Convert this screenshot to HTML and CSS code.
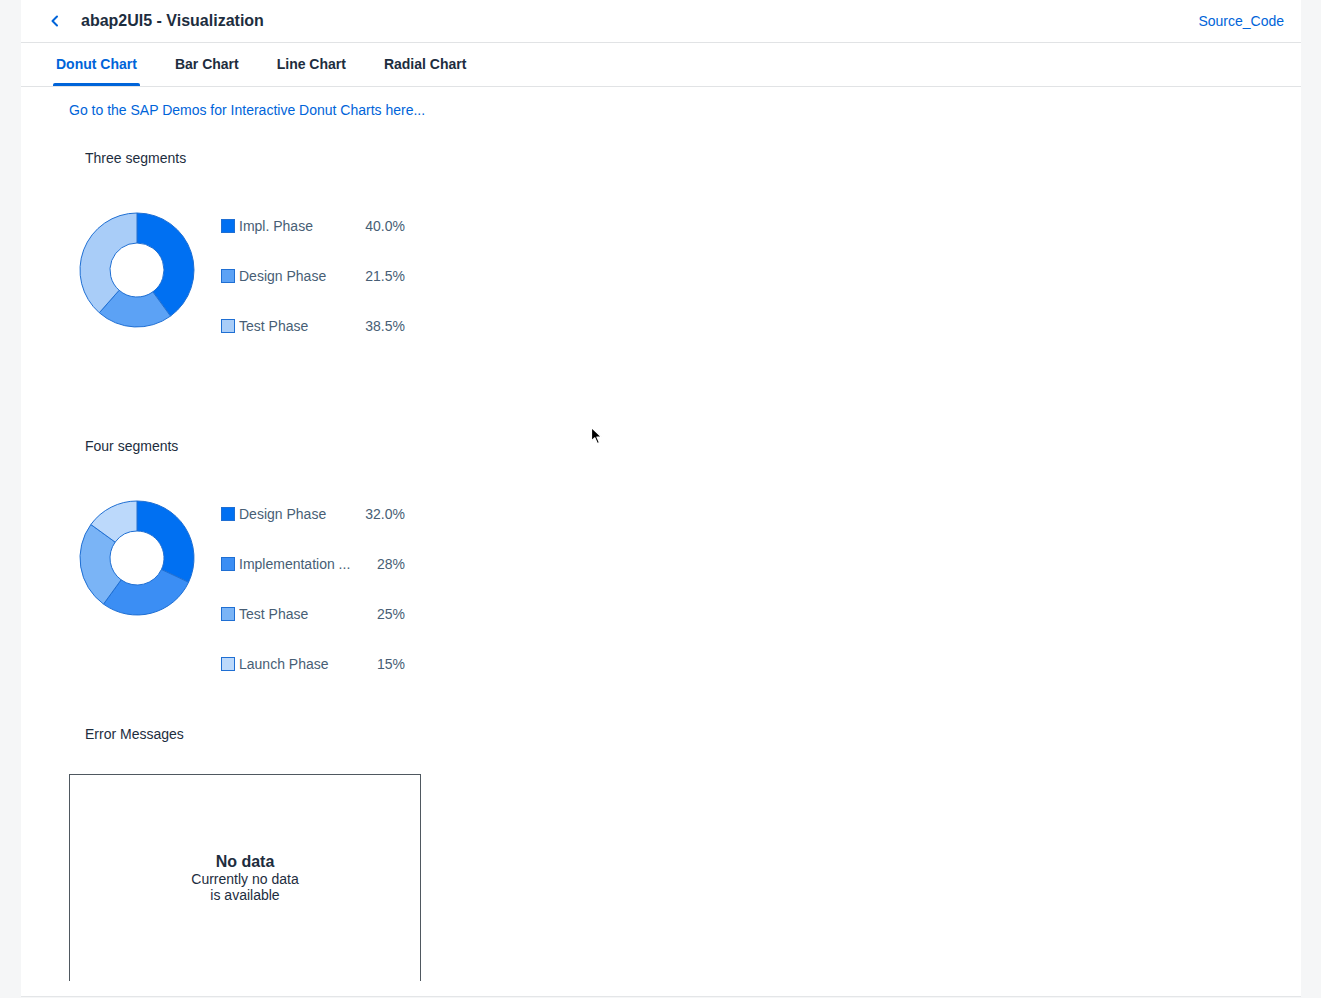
FILE: index.html
```html
<!DOCTYPE html>
<html lang="en">
<head>
<meta charset="utf-8">
<title>abap2UI5 - Visualization</title>
<link rel="stylesheet" href="styles.css">
</head>
<body>
<div class="page">
  <header class="header">
    <div class="header-left">
      <svg class="back" width="12" height="14" viewBox="0 0 12 14"><polyline points="8,2.5 3.5,7 8,11.5" fill="none" stroke="#0064d9" stroke-width="2" stroke-linecap="round" stroke-linejoin="round"/></svg>
      <span class="title">abap2UI5 - Visualization</span>
    </div>
    <a class="source">Source_Code</a>
  </header>
  <nav class="tabs">
    <div class="tab active">Donut Chart</div>
    <div class="tab">Bar Chart</div>
    <div class="tab">Line Chart</div>
    <div class="tab">Radial Chart</div>
  </nav>
  <main class="content">
    <a class="demo-link">Go to the SAP Demos for Interactive Donut Charts here...</a>

    <section class="section">
      <div class="section-title">Three segments</div>
      <div class="chart-row">
        <svg class="donut" width="116" height="116" viewBox="0 0 116 116">
          <g stroke="#1f6fd3" stroke-width="1" stroke-linejoin="round">
            <path fill="#0070f2" d="M58 1 A57 57 0 0 1 91.50 104.11 L73.87 79.84 A27 27 0 0 0 58 31 Z"/>
            <path fill="#5ca2f5" d="M91.50 104.11 A57 57 0 0 1 20.31 100.76 L40.14 78.25 A27 27 0 0 0 73.87 79.84 Z"/>
            <path fill="#a9cdf8" d="M20.31 100.76 A57 57 0 0 1 58 1 L58 31 A27 27 0 0 0 40.14 78.25 Z"/>
          </g>
        </svg>
        <div class="legend">
          <div class="legend-row"><span class="swatch c1"></span><span class="label">Impl. Phase</span><span class="value">40.0%</span></div>
          <div class="legend-row"><span class="swatch c2"></span><span class="label">Design Phase</span><span class="value">21.5%</span></div>
          <div class="legend-row"><span class="swatch c3"></span><span class="label">Test Phase</span><span class="value">38.5%</span></div>
        </div>
      </div>
    </section>

    <section class="section">
      <div class="section-title">Four segments</div>
      <div class="chart-row">
        <svg class="donut" width="116" height="116" viewBox="0 0 116 116">
          <g stroke="#1f6fd3" stroke-width="1" stroke-linejoin="round">
            <path fill="#0070f2" d="M58 1 A57 57 0 0 1 109.57 82.27 L82.43 69.50 A27 27 0 0 0 58 31 Z"/>
            <path fill="#3b8ef4" d="M109.57 82.27 A57 57 0 0 1 24.50 104.11 L42.13 79.84 A27 27 0 0 0 82.43 69.50 Z"/>
            <path fill="#7ab4f6" d="M24.50 104.11 A57 57 0 0 1 11.89 24.50 L36.16 42.13 A27 27 0 0 0 42.13 79.84 Z"/>
            <path fill="#bcd9fb" d="M11.89 24.50 A57 57 0 0 1 58 1 L58 31 A27 27 0 0 0 36.16 42.13 Z"/>
          </g>
        </svg>
        <div class="legend">
          <div class="legend-row"><span class="swatch c1"></span><span class="label">Design Phase</span><span class="value">32.0%</span></div>
          <div class="legend-row"><span class="swatch d2"></span><span class="label">Implementation ...</span><span class="value">28%</span></div>
          <div class="legend-row"><span class="swatch d3"></span><span class="label">Test Phase</span><span class="value">25%</span></div>
          <div class="legend-row"><span class="swatch d4"></span><span class="label">Launch Phase</span><span class="value">15%</span></div>
        </div>
      </div>
    </section>

    <section class="section error">
      <div class="section-title">Error Messages</div>
      <div class="nodata">
        <div class="nodata-title">No data</div>
        <div class="nodata-text">Currently no data</div>
        <div class="nodata-text">is available</div>
      </div>
    </section>

    <svg class="cursor" width="14" height="20" viewBox="0 0 14 20"><path d="M1.5 1.5 L1.5 15 L4.8 11.8 L7.3 17.5 L9.4 16.6 L6.9 11 L11.5 11 Z" fill="#000" stroke="#fff" stroke-width="1.2" stroke-linejoin="round"/></svg>
  </main>
</div>
</body>
</html>
```

FILE: styles.css
```css
html, body {
  margin: 0;
  padding: 0;
}
body {
  background: #f5f6f7;
  font-family: "Liberation Sans", Arial, sans-serif;
  color: #1d2d3e;
  height: 998px;
  overflow: hidden;
}
.page {
  margin: 0 20px 0 21px;
  background: #ffffff;
  height: 996px;
  overflow: hidden;
  border-bottom: 1px solid #e4e6e8;
}
.header {
  height: 42px;
  border-bottom: 1px solid #e1e3e5;
  display: flex;
  align-items: center;
  justify-content: space-between;
  padding: 0 17px 0 28px;
}
.header-left {
  display: flex;
  align-items: center;
}
.back {
  display: block;
  margin-right: 20px;
}
.title {
  font-size: 16px;
  font-weight: bold;
  color: #1d2d3e;
}
.source {
  font-size: 14px;
  color: #0064d9;
}
.tabs {
  height: 43px;
  border-bottom: 1px solid #e1e3e5;
  display: flex;
  padding-left: 32px;
  gap: 32px;
}
.tab {
  position: relative;
  padding: 0 3px;
  font-size: 14px;
  font-weight: bold;
  color: #1d2d3e;
  line-height: 43px;
}
.tab.active {
  color: #0064d9;
}
.tab.active::after {
  content: "";
  position: absolute;
  left: 0;
  right: 0;
  bottom: 0;
  height: 3px;
  background: #0064d9;
  border-radius: 2px 2px 0 0;
}
.content {
  position: relative;
  padding: 13px 0 0 48px;
  height: 881px;
  overflow: hidden;
}
.demo-link {
  display: block;
  font-size: 14px;
  line-height: 20px;
  color: #0064d9;
}
.section {
  height: 288px;
}
.section:first-of-type {
  margin-top: 28px;
}
.section-title {
  font-size: 14px;
  line-height: 20px;
  padding-left: 16px;
  color: #1d2d3e;
}
.chart-row {
  display: flex;
  align-items: flex-start;
  margin-top: 32px;
  padding-left: 10px;
}
.donut {
  display: block;
  margin-top: 12px;
}
.legend {
  margin-left: 26px;
  width: 184px;
  padding-top: 1px;
}
.legend-row {
  height: 50px;
  display: flex;
  align-items: center;
  font-size: 14px;
  color: #475e75;
}
.swatch {
  width: 12px;
  height: 12px;
  border: 1px solid #1f6fd3;
  margin-right: 4px;
  flex: none;
}
.c1 { background: #0070f2; }
.c2 { background: #5ca2f5; }
.c3 { background: #a9cdf8; }
.d2 { background: #3b8ef4; }
.d3 { background: #7ab4f6; }
.d4 { background: #bcd9fb; }
.label {
  flex: 1;
}
.value {
  text-align: right;
}
.nodata {
  margin-top: 30px;
  width: 352px;
  height: 260px;
  border: 1.5px solid #4f5860;
  display: flex;
  flex-direction: column;
  align-items: center;
  padding-top: 78px;
  box-sizing: border-box;
}
.nodata-title {
  font-size: 16px;
  font-weight: bold;
  line-height: 18px;
  color: #1d2d3e;
}
.nodata-text {
  font-size: 14px;
  line-height: 16px;
  color: #1d2d3e;
}
.cursor {
  position: absolute;
  left: 569px;
  top: 339px;
}
```
